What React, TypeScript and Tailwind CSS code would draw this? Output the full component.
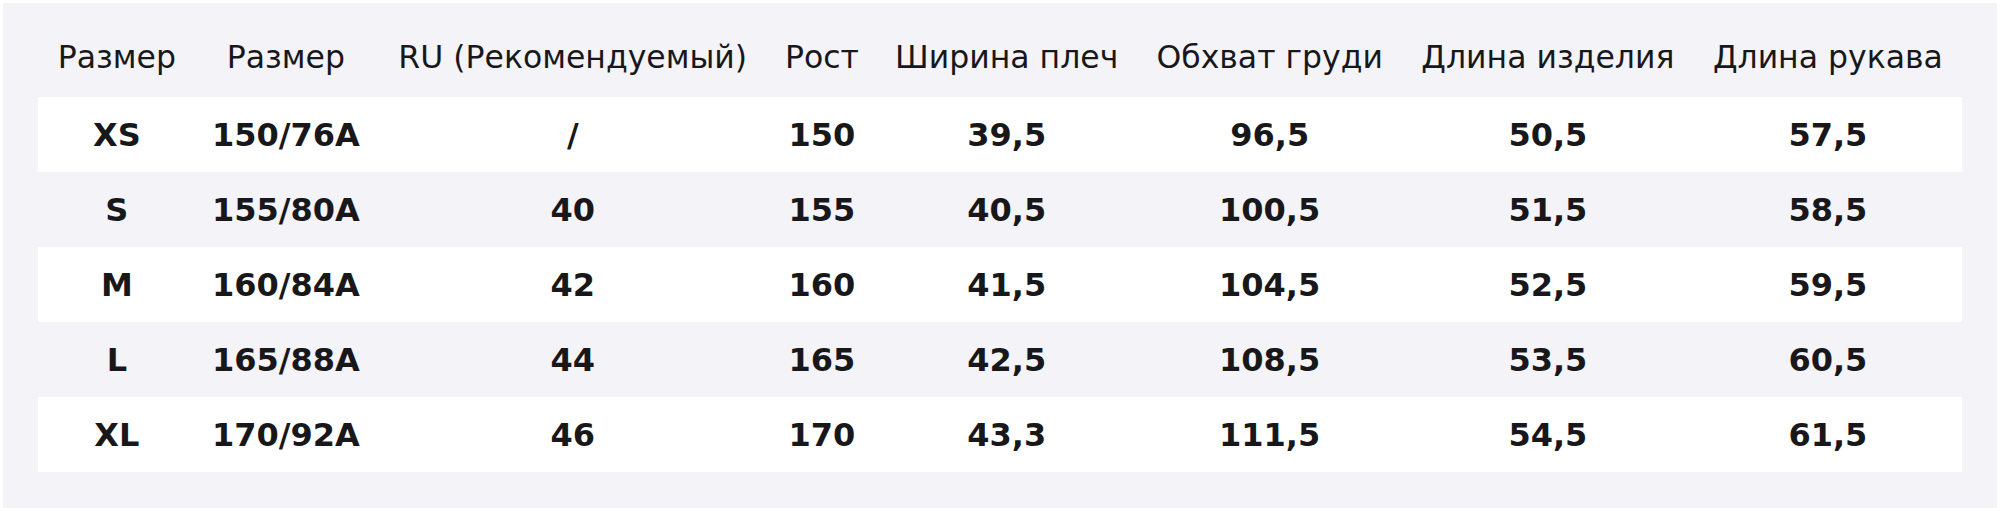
import React from "react";

const headers = [
  "Размер",
  "Размер",
  "RU (Рекомендуемый)",
  "Рост",
  "Ширина плеч",
  "Обхват груди",
  "Длина изделия",
  "Длина рукава",
];

const rows = [
  ["XS", "150/76A", "/", "150", "39,5", "96,5", "50,5", "57,5"],
  ["S", "155/80A", "40", "155", "40,5", "100,5", "51,5", "58,5"],
  ["M", "160/84A", "42", "160", "41,5", "104,5", "52,5", "59,5"],
  ["L", "165/88A", "44", "165", "42,5", "108,5", "53,5", "60,5"],
  ["XL", "170/92A", "46", "170", "43,3", "111,5", "54,5", "61,5"],
];

export default function App() {
  return (
    <div className="bg-white p-[3px] w-[2000px] h-[511px]">
      <div
        className="bg-[#f3f3f8] h-[505px] px-[35px] pt-[16px] text-[#18181b]"
        style={{ fontFamily: '"DejaVu Sans", Verdana, sans-serif' }}
      >
        <table className="w-full border-collapse">
          <thead>
            <tr className="h-[78px]">
              {headers.map((h, i) => (
                <th
                  key={i}
                  className={
                    i === 0
                      ? "pl-[18px] pr-[16px] text-center font-normal text-[31.5px] whitespace-nowrap"
                      : "px-[16px] text-center font-normal text-[31.5px] whitespace-nowrap"
                  }
                >
                  {h}
                </th>
              ))}
            </tr>
          </thead>
          <tbody>
            {rows.map((r, ri) => (
              <tr
                key={ri}
                className={ri % 2 === 0 ? "h-[75px] bg-white" : "h-[75px]"}
              >
                {r.map((c, ci) => (
                  <td
                    key={ci}
                    className={
                      ci === 0
                        ? "pl-[18px] pr-[16px] text-center font-bold text-[32px] whitespace-nowrap"
                        : "px-[16px] text-center font-bold text-[32px] whitespace-nowrap"
                    }
                  >
                    {c}
                  </td>
                ))}
              </tr>
            ))}
          </tbody>
        </table>
      </div>
    </div>
  );
}
